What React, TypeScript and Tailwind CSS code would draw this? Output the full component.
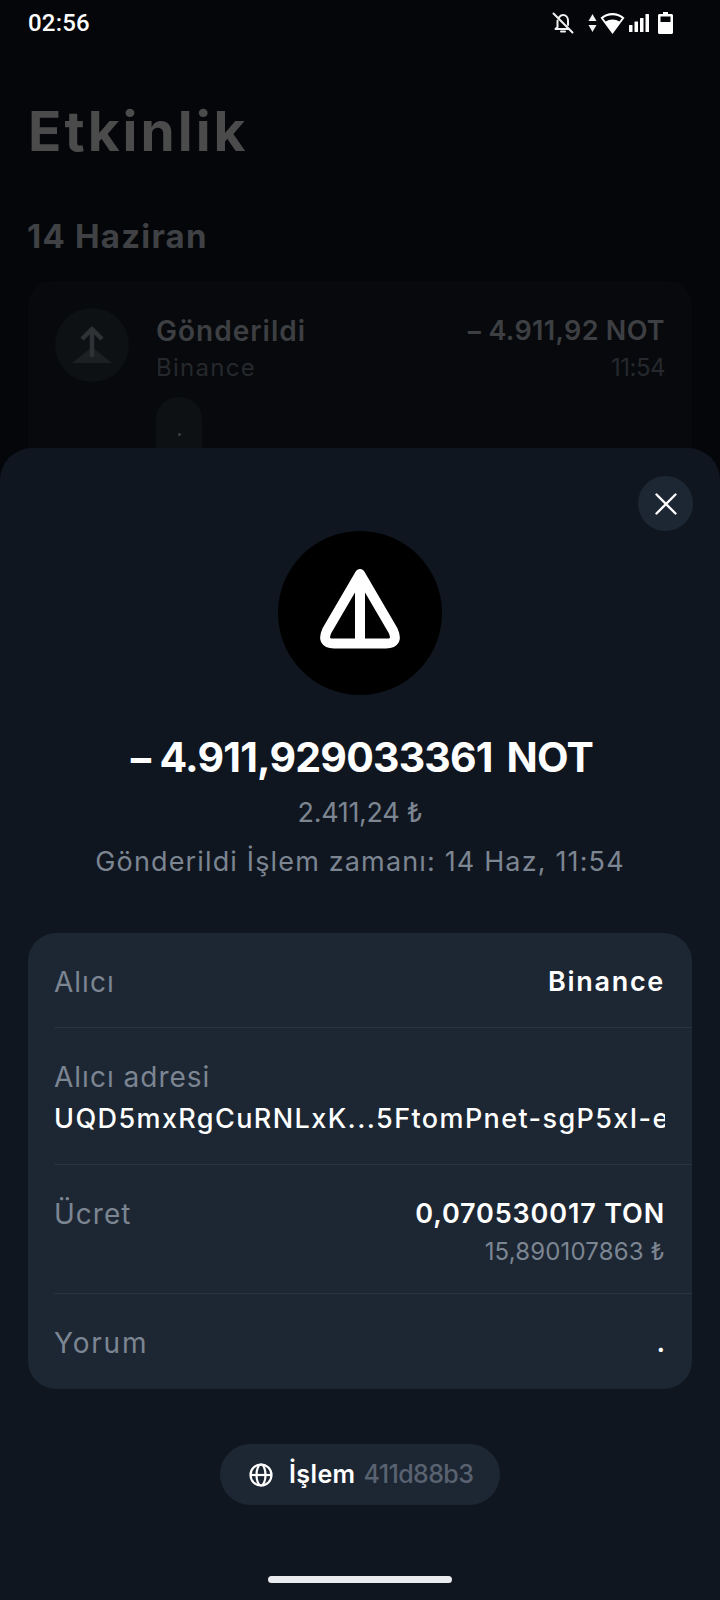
import React from 'react';
import { X } from 'lucide-react';

const StatusIcons = () => (
  <div className="flex items-center">
    {/* bildirim kapali */}
    <svg width="22" height="22" viewBox="0 0 22 22" fill="none" stroke="#f1f1f1" strokeWidth="2" strokeLinecap="round" strokeLinejoin="round">
      <path d="M7 5.500C8 3.800 9.400 3 11 3c3 0 5 2.300 5 5.500V13" />
      <path d="M5.500 8.500V15L3.500 17H16" />
      <path d="M9 19.500h4" />
      <path d="M1.500 1.500l19 19" />
    </svg>
    <svg className="ml-[14px]" width="9" height="18" viewBox="0 0 9 18" fill="#f1f1f1">
      <path d="M4.500 0L8.500 7H.5z" />
      <path d="M4.500 18L.5 11h8z" />
    </svg>
    <svg className="ml-[3px]" width="25" height="21" viewBox="0 0 25 21" fill="#fff">
      <path fillRule="evenodd" d="M12.500 0C8 0 3.800 1.700.5 4.800L12.500 21 24.500 4.800C21.200 1.700 17 0 12.500 0zM12.500 2.200c3.500 0 6.800 1.100 9.400 3l-2.500 3.400c-2-1.300-4.400-2-6.900-2s-4.900.7-6.900 2L3.100 5.200c2.600-1.900 5.900-3 9.400-3z" />
    </svg>
    <svg className="ml-[4px]" width="20" height="18" viewBox="0 0 20 18" fill="#fff">
      <rect x="0" y="11" width="3.500" height="7" rx=".5" />
      <rect x="5.500" y="7.500" width="3.500" height="10.500" rx=".5" />
      <rect x="11" y="4" width="3.500" height="14" rx=".5" />
      <rect x="16.500" y="0" width="3.500" height="18" rx=".5" />
    </svg>
    <svg className="ml-[9px]" width="15" height="22" viewBox="0 0 15 22" fill="#fff">
      <path fillRule="evenodd" d="M5 0h5v2h3.500c.8 0 1.500.7 1.500 1.500V20.500c0 .8-.7 1.500-1.500 1.500h-12C.7 22 0 21.300 0 20.500V3.500C0 2.700.7 2 1.500 2H5zM2.500 4.500V10h10V4.500z" />
    </svg>
  </div>
);

const NotLogo = () => (
  <svg className="mb-[9px]" width="80" height="80" viewBox="0 0 80 80" fill="none" stroke="#fff" strokeWidth="10" strokeLinejoin="round">
    <path d="M40 5L73 61.500Q79 74.500 66 74.500H14Q1 74.500 7 61.500Z" />
    <path d="M40 5V74.500" />
  </svg>
);

const labelCls = 'block text-[#7c8592] text-[28px] leading-[36px] tracking-[1px]';

export default function App() {
  return (
    <div
      className="relative w-[720px] h-[1600px] overflow-hidden bg-[#040609]"
      style={{ fontFamily: 'Inter, "Noto Sans", sans-serif' }}
    >
      {/* Status bar */}
      <div className="flex items-center justify-between h-[46px] pl-[28px] pr-[47px]">
        <span className="text-white text-[24px] font-medium tracking-[0.2px]" style={{ fontFamily: 'Roboto, sans-serif' }}>02:56</span>
        <StatusIcons />
      </div>

      {/* Arka plan - Etkinlik */}
      <div className="px-[28px]">
        <h1 className="mt-[55px] text-[55px] leading-[60px] font-bold text-[#4b4b4c] tracking-[3px]">Etkinlik</h1>
        <h2 className="mt-[55px] text-[33px] leading-[40px] font-bold text-[#3f4145] tracking-[1.2px] -ml-[1px]">14 Haziran</h2>
        <div className="mt-[25px] h-[240px] rounded-[24px] bg-[#07090c] pt-[27px] pl-[27px] pr-[27px] flex gap-[27px]">
          <div className="w-[74px] h-[74px] rounded-full bg-[#0e1114] flex items-center justify-center shrink-0">
            <svg width="42" height="38" viewBox="0 0 42 38">
              <path d="M1 37L21 21 41 37z" fill="#1d2023" />
              <path d="M21 31V3M11 13L21 3l10 10" fill="none" stroke="#2f3235" strokeWidth="4.500" strokeLinejoin="round" />
            </svg>
          </div>
          <div className="flex-1">
            <div className="flex justify-between items-center h-[36px] mt-[5px]">
              <span className="text-[28px] font-semibold text-[#3d3f43] tracking-[1px]">Gönderildi</span>
              <span className="text-[27px] font-semibold text-[#3d3f43] tracking-[0.3px]">−{'\u2009'}4.911,92 NOT</span>
            </div>
            <div className="flex justify-between items-center h-[36px] text-[24px] text-[#25282c] mt-[1px]">
              <span className="tracking-[1.3px]">Binance</span>
              <span className="tracking-[-0.5px]">11:54</span>
            </div>
            <div className="mt-[11px] w-[46px] h-[80px] rounded-[22px] bg-[#0e1114] flex justify-center pt-[36px]">
              <span className="w-[3px] h-[3px] rounded-full bg-[#3d3f43]" />
            </div>
          </div>
        </div>
      </div>

      {/* Alt panel */}
      <div className="absolute inset-x-0 top-[448px] bottom-0 rounded-t-[32px] bg-[#10161f] flex flex-col items-center">
        <button className="absolute top-[28px] right-[27px] w-[55px] h-[55px] rounded-full bg-[#1d2733] flex items-center justify-center">
          <X size={38} color="#fff" strokeWidth={1.5} />
        </button>

        <div className="mt-[83px] w-[164px] h-[164px] rounded-full bg-black flex items-center justify-center">
          <NotLogo />
        </div>

        <div className="mt-[37px] text-white text-[41px] leading-[50px] font-bold tracking-[-0.8px] [word-spacing:5px]">−{'\u2009'}4.911,929033361 NOT</div>
        <div className="mt-[14px] text-[#7c8592] text-[27px] leading-[34px] tracking-[-0.3px]">2.411,24 ₺</div>
        <div className="mt-[15px] text-[#7c8592] text-[27px] leading-[34px] tracking-[1.15px]">Gönderildi İşlem zamanı: 14 Haz, 11:54</div>

        <div className="mt-[54px] w-[664px] h-[456px] rounded-[28px] bg-[#1d2733] pl-[26px] flex flex-col">
          <div className="h-[95px] pt-[31px] pr-[27px] flex justify-between border-b border-[#2a3441]">
            <span className={labelCls}>Alıcı</span>
            <span className="text-white text-[27px] leading-[36px] font-semibold tracking-[1.7px]">Binance</span>
          </div>
          <div className="h-[137px] pt-[31px] pr-[27px] border-b border-[#2a3441]">
            <span className={labelCls}>Alıcı adresi</span>
            <div className="mt-[6px] text-white text-[27px] leading-[36px] font-medium tracking-[1.4px] overflow-hidden whitespace-nowrap">UQD5mxRgCuRNLxK...5FtomPnet-sgP5xI-e</div>
          </div>
          <div className="h-[129px] pt-[31px] pr-[27px] flex justify-between border-b border-[#2a3441]">
            <span className={labelCls}>Ücret</span>
            <div className="text-right">
              <div className="text-white text-[27px] leading-[36px] font-semibold tracking-[0.85px]">0,070530017 TON</div>
              <div className="mt-[3px] text-[#7c8592] text-[24px] leading-[34px] tracking-[0.15px]">15,890107863 ₺</div>
            </div>
          </div>
          <div className="pt-[31px] pr-[27px] flex justify-between">
            <span className="block text-[#7c8592] text-[28px] leading-[36px] tracking-[1.8px]">Yorum</span>
            <span className="text-white text-[27px] leading-[36px] font-semibold">.</span>
          </div>
        </div>

        <button className="mt-[55px] w-[280px] h-[61px] rounded-full bg-[#1d2733] flex items-center pl-[29px]">
          <svg width="24" height="24" viewBox="0 0 24 24" fill="none" stroke="#fff" strokeWidth="2.200">
            <circle cx="12" cy="12" r="10.500" />
            <ellipse cx="12" cy="12" rx="4.500" ry="10.500" />
            <path d="M1.500 12h21" />
          </svg>
          <span className="ml-[16px] text-white text-[25px] font-semibold tracking-[0.4px]">İşlem</span>
          <span className="ml-[8px] text-[#596270] text-[25px] font-medium tracking-[-0.6px]">411d88b3</span>
        </button>

        <div className="absolute bottom-[17px] left-[268px] w-[184px] h-[7px] rounded-full bg-[#e9ebef]" />
      </div>
    </div>
  );
}
